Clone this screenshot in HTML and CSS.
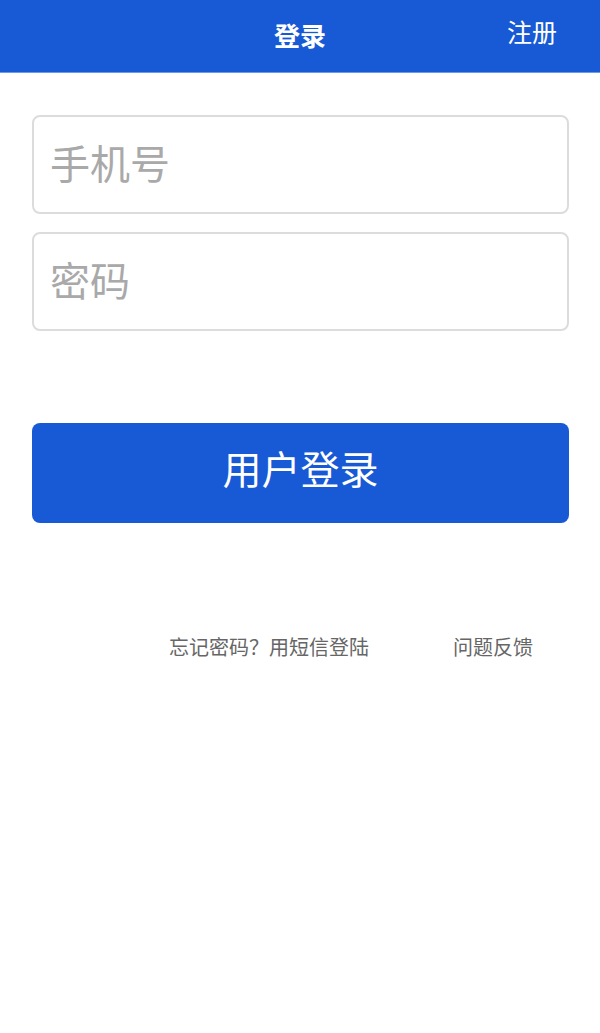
FILE: index.html
```html
<!DOCTYPE html>
<html lang="zh-CN">
<head>
<meta charset="utf-8">
<title>登录</title>
<link rel="stylesheet" href="styles.css">
</head>
<body>
<header class="topbar">
  <div class="topbar-title">登录</div>
  <a class="topbar-action">注册</a>
</header>
<main class="form">
  <div class="field"><span class="placeholder">手机号</span></div>
  <div class="field"><span class="placeholder">密码</span></div>
  <button class="submit">用户登录</button>
  <div class="links">
    <a class="link">忘记密码？用短信登陆</a>
    <a class="link">问题反馈</a>
  </div>
</main>
</body>
</html>
```

FILE: styles.css
```css
* { box-sizing: border-box; }
html, body { margin: 0; padding: 0; background: #fff; }
body {
  font-family: "Noto Sans CJK SC", "Noto Sans", sans-serif;
  width: 600px;
  height: 1033px;
}
.topbar {
  height: 73px;
  background: #1859d5;
  border-bottom: 1px solid #6a9ae8;
  display: flex;
  align-items: center;
  justify-content: center;
  position: relative;
}
.topbar-title {
  color: #fff;
  font-size: 26px;
  font-weight: 700;
  line-height: 1;
  margin-top: -2px;
}
.topbar-action {
  position: absolute;
  right: 43px;
  top: 15px;
  color: #fff;
  font-size: 25px;
  line-height: 32px;
}
.form {
  padding: 42px 31px 0 32px;
  display: flex;
  flex-direction: column;
}
.field {
  height: 99px;
  border: 2px solid #dcdcdc;
  border-radius: 8px;
  display: flex;
  align-items: center;
  padding-left: 16px;
  margin-bottom: 18px;
}
.placeholder {
  color: #a9a9a9;
  font-size: 40px;
  line-height: 1;
  margin-top: -6px;
}
.submit {
  margin-top: 74px;
  height: 100px;
  border: none;
  border-radius: 8px;
  background: #1859d5;
  color: #fff;
  font-family: inherit;
  font-size: 39px;
  line-height: 1;
  padding: 0 0 12px 0;
}
.links {
  margin-top: 109px;
  display: flex;
  justify-content: flex-end;
  gap: 84px;
  padding-right: 36px;
}
.link {
  color: #666;
  font-size: 20px;
  line-height: 30px;
}
```
